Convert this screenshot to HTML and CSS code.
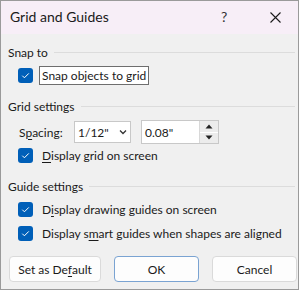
FILE: index.html
```html
<!DOCTYPE html>
<html>
<head>
    <title>Grid and Guides</title>
    <link rel="stylesheet" href="styles.css">
</head>
<body>
    <div class="dialog">
        <div class="titlebar">
            <span class="title">Grid and Guides</span>
            <span class="help">?</span>
            <span class="close">
                <svg width="11" height="11" viewBox="0 0 11 11"><path d="M0.5 0.5 L10.5 10.5 M10.5 0.5 L0.5 10.5" stroke="#1a1a1a" stroke-width="1.1" fill="none"/></svg>
            </span>
        </div>

        <div class="content">
            <div class="group-title"><span>Snap to</span></div>
            <div class="check-row">
                <span class="check"><svg width="15" height="15" viewBox="0 0 15 15"><path d="M4.3 7.7 L6.4 9.8 L10.8 5.4" stroke="#fff" stroke-width="1" fill="none"/></svg></span>
                <span class="label focused">Snap objects to grid</span>
            </div>

            <div class="group-title"><span>Grid settings</span></div>
            <div class="spacing-row">
                <span class="spacing-label">S<u>p</u>acing:</span>
                <div class="combo">
                    <span class="combo-value">1/12"</span>
                    <span class="combo-arrow">
                        <svg width="8" height="6" viewBox="0 0 8 6"><path d="M1 1.5 L4 4.5 L7 1.5" stroke="#333" stroke-width="1.3" fill="none"/></svg>
                    </span>
                </div>
                <div class="spin">
                    <span class="spin-value">0.08"</span>
                    <span class="spin-buttons">
                        <span class="spin-btn"><svg width="8" height="5" viewBox="0 0 8 5"><path d="M0.5 4.5 L4 0.5 L7.5 4.5 Z" fill="#222"/></svg></span>
                        <span class="spin-btn"><svg width="8" height="5" viewBox="0 0 8 5"><path d="M0.5 0.5 L4 4.5 L7.5 0.5 Z" fill="#222"/></svg></span>
                    </span>
                </div>
            </div>
            <div class="check-row">
                <span class="check"><svg width="15" height="15" viewBox="0 0 15 15"><path d="M4.3 7.7 L6.4 9.8 L10.8 5.4" stroke="#fff" stroke-width="1" fill="none"/></svg></span>
                <span class="label"><u>D</u>isplay grid on screen</span>
            </div>

            <div class="group-title"><span>Guide settings</span></div>
            <div class="check-row">
                <span class="check"><svg width="15" height="15" viewBox="0 0 15 15"><path d="M4.3 7.7 L6.4 9.8 L10.8 5.4" stroke="#fff" stroke-width="1" fill="none"/></svg></span>
                <span class="label">D<u>i</u>splay drawing guides on screen</span>
            </div>
            <div class="check-row">
                <span class="check"><svg width="15" height="15" viewBox="0 0 15 15"><path d="M4.3 7.7 L6.4 9.8 L10.8 5.4" stroke="#fff" stroke-width="1" fill="none"/></svg></span>
                <span class="label">Display s<u>m</u>art guides when shapes are aligned</span>
            </div>
        </div>

        <div class="buttons">
            <button class="btn wide">Set as De<u>f</u>ault</button>
            <button class="btn default">OK</button>
            <button class="btn">Cancel</button>
        </div>
    </div>
</body>
</html>
```

FILE: styles.css
```css
body {
    margin: 0;
    font-family: Lato, "Noto Sans", sans-serif;
    font-size: 12px;
    color: #1a1a1a;
    background: #ffffff;
}
u {
    text-decoration-thickness: 1px;
    text-underline-offset: 2px;
}
.dialog {
    width: 299px;
    height: 290px;
    box-sizing: border-box;
    border: 1px solid #9a9a9a;
    background: #f0f0f0;
    display: flex;
    flex-direction: column;
}
.titlebar {
    height: 33px;
    background: #f7eef7;
    display: flex;
    align-items: center;
    padding-left: 9px;
    flex-shrink: 0;
}
.title {
    font-size: 14px;
    flex: 1;
    padding-bottom: 2px;
}
.help {
    font-size: 14px;
    width: 14px;
    margin-right: 35px;
    color: #333;
    padding-bottom: 2px;
}
.close {
    width: 11px;
    height: 11px;
    margin-right: 17px;
    display: flex;
}
.content {
    padding: 9px 0 0 7px;
    flex: 1;
}
.group-title {
    display: flex;
    align-items: center;
    gap: 6px;
    height: 18px;
    margin-top: 10px;
    margin-bottom: 3px;
}
.group-title:first-child {
    margin-top: 0;
}
.group-title::after {
    content: "";
    flex: 1;
    height: 1px;
    background: #dcdcdc;
    margin-right: 3px;
}
.check-row {
    display: flex;
    align-items: center;
    height: 23px;
    padding-left: 10px;
    white-space: nowrap;
}
.check-row + .check-row {
    margin-top: 1px;
}
.check {
    width: 15px;
    height: 15px;
    border-radius: 3px;
    background: #005fb8;
    display: flex;
    margin-right: 8px;
    flex-shrink: 0;
}
.label {
    padding: 1px 2px;
    margin-left: -2px;
    border: 1px solid transparent;
}
.label.focused {
    border: 1px solid #6e6e6e;
    background: #ffffff;
}
.spacing-row {
    display: flex;
    align-items: center;
    height: 24px;
    padding-left: 11px;
    margin-top: 5px;
}
.spacing-label {
    width: 55px;
}
.combo {
    width: 57px;
    height: 22px;
    box-sizing: border-box;
    border: 1px solid #c8c8c8;
    background: #ffffff;
    display: flex;
    align-items: center;
}
.combo-value {
    flex: 1;
    padding-left: 3px;
}
.combo-arrow {
    width: 14px;
    height: 20px;
    display: flex;
    align-items: center;
    justify-content: center;
}
.spin {
    margin-left: 10px;
    width: 78px;
    height: 24px;
    box-sizing: border-box;
    border: 1px solid #c8c8c8;
    background: #ffffff;
    display: flex;
}
.spin-value {
    flex: 1;
    padding-left: 3px;
    display: flex;
    align-items: center;
}
.spin-buttons {
    width: 18px;
    display: flex;
    flex-direction: column;
    border-left: 1px solid #d8d8d8;
}
.spin-btn {
    flex: 1;
    background: #ececec;
    display: flex;
    align-items: center;
    justify-content: center;
}
.spin-btn + .spin-btn {
    border-top: 1px solid #ffffff;
}
.buttons {
    display: flex;
    gap: 13px;
    padding: 0 0 7px 8px;
}
.btn {
    width: 85px;
    height: 26px;
    font-family: inherit;
    font-size: 12px;
    color: #1a1a1a;
    background: #fdfdfd;
    border: 1px solid #dadada;
    border-radius: 4px;
    padding: 0;
}
.btn.wide {
    width: 92px;
}
.btn.default {
    border: 1px solid #7aa3d2;
}
```
